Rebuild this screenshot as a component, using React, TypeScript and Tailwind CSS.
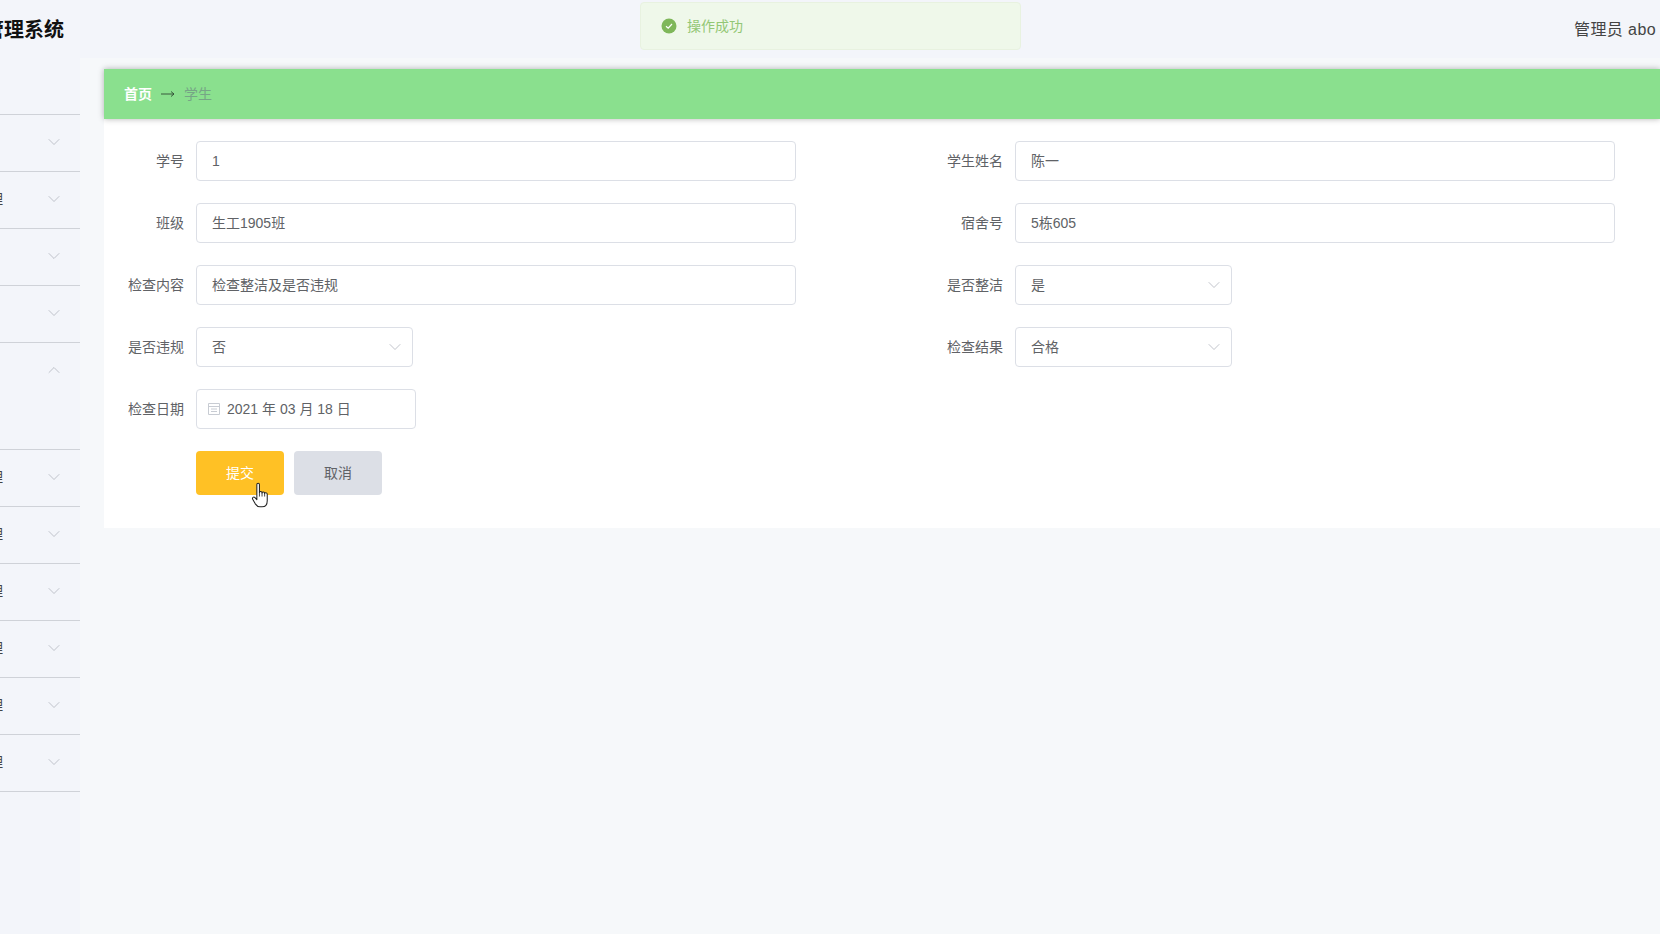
import { ChevronDown, ChevronUp } from "lucide-react";

const sidebarRows = [
  { label: "", h: "h-[57px]" },
  { label: "宿舍管理", h: "h-[57px]" },
  { label: "", h: "h-[57px]" },
  { label: "", h: "h-[57px]" },
  { label: "", h: "h-[107px]", open: true },
  { label: "宿舍管理", h: "h-[57px]" },
  { label: "宿舍管理", h: "h-[57px]" },
  { label: "宿舍管理", h: "h-[57px]" },
  { label: "宿舍管理", h: "h-[57px]" },
  { label: "宿舍管理", h: "h-[57px]" },
  { label: "宿舍管理", h: "h-[58px]" },
];

function Label({ text }: { text: string }) {
  return <label className="w-[80px] shrink-0 text-right text-sm text-[#606266]">{text}</label>;
}

function TextField({ label, value }: { label: string; value: string }) {
  return (
    <div className="flex items-center gap-3">
      <Label text={label} />
      <div className="flex h-10 w-[600px] items-center rounded border border-[#dcdfe6] bg-white px-[15px] text-sm text-[#606266]">
        {value}
      </div>
    </div>
  );
}

function SelectField({ label, value }: { label: string; value: string }) {
  return (
    <div className="flex items-center gap-3">
      <Label text={label} />
      <div className="flex h-10 w-[217px] items-center justify-between rounded border border-[#dcdfe6] bg-white pl-[15px] pr-[7px] text-sm text-[#606266]">
        <span>{value}</span>
        <ChevronDown size={20} strokeWidth={1} className="text-[#b4b8c0]" />
      </div>
    </div>
  );
}

export default function App() {
  return (
    <div className="relative flex h-screen w-full flex-col overflow-hidden bg-[#f3f5fa] font-['Liberation_Sans','Noto_Sans_CJK_SC',sans-serif]">
      <header className="flex h-[58px] shrink-0 items-center justify-between pr-1 pt-[2px]">
        <div className="flex w-[64px] justify-end overflow-hidden">
          <h1 className="shrink-0 whitespace-nowrap text-xl font-bold text-[#111]">宿舍管理系统</h1>
        </div>
        <span className="text-base tracking-[0.4px] text-[#444]">管理员 abo</span>
      </header>

      <div className="absolute left-[640px] top-[2px] flex h-12 w-[381px] items-center gap-[10px] rounded border border-[#e8f2e0] bg-[#eff8ea] pl-[20px] text-sm text-[#93c775]">
        <svg width="16" height="16" viewBox="0 0 16 16">
          <circle cx="8" cy="8" r="7.5" fill="#7fb75a" />
          <path d="M5 8.2 7.2 10.2 11 6" fill="none" stroke="#fff" strokeWidth="1.2" />
        </svg>
        操作成功
      </div>

      <div className="flex min-h-0 flex-1">
        <aside className="flex w-20 shrink-0 flex-col overflow-hidden pt-[56px]">
          {sidebarRows.map((row, i) => (
            <div key={i} className={`${row.h} flex border-t border-[#cfd2d8] last:border-b`}>
              <div className="flex h-[54px] w-full items-center overflow-hidden">
                {row.label ? (
                  <span className="-ml-[53px] w-[56px] shrink-0 text-sm text-[#444]">{row.label}</span>
                ) : (
                  <span className="w-[3px] shrink-0" />
                )}
                <span className="ml-[41px]">
                  {row.open ? (
                    <ChevronUp size={20} strokeWidth={1} className="text-[#b4b8c0]" />
                  ) : (
                    <ChevronDown size={20} strokeWidth={1} className="text-[#b4b8c0]" />
                  )}
                </span>
              </div>
            </div>
          ))}
        </aside>

        <main className="min-w-0 flex-1 bg-[#f6f8fa] pl-6 pt-[11px]">
          <div className="relative z-10 flex h-[50px] items-center bg-[#8ae08e] pl-5 text-sm shadow-[0_0_6px_rgba(0,0,0,0.3)]">
            <span className="font-bold text-white">首页</span>
            <svg width="14" height="8" viewBox="0 0 14 8" className="ml-[9px] mr-[9px]">
              <path d="M0 4H13M10 1.500 13 4 10 6.500" fill="none" stroke="#2f4a33" strokeWidth="0.9" />
            </svg>
            <span className="text-[#76a586]">学生</span>
          </div>

          <section className="bg-white pb-[33px] pt-[22px]">
            <div className="grid grid-cols-[819px_737px] gap-y-[22px]">
              <TextField label="学号" value="1" />
              <TextField label="学生姓名" value="陈一" />
              <TextField label="班级" value="生工1905班" />
              <TextField label="宿舍号" value="5栋605" />
              <TextField label="检查内容" value="检查整洁及是否违规" />
              <SelectField label="是否整洁" value="是" />
              <SelectField label="是否违规" value="否" />
              <SelectField label="检查结果" value="合格" />
              <div className="col-span-2 flex items-center gap-3">
                <Label text="检查日期" />
                <div className="flex h-10 w-[220px] items-center rounded border border-[#dcdfe6] bg-white pl-[10px] text-sm text-[#606266]">
                  <svg width="14" height="14" viewBox="0 0 14 14" className="mr-[6px]">
                    <path d="M1.500 1.500h11v11h-11zM1.500 4.500h11M4 7h6M4 9.500h6" fill="none" stroke="#c8ccd3" strokeWidth="1" />
                  </svg>
                  2021 年 03 月 18 日
                </div>
              </div>
              <div className="col-span-2 flex gap-[10px] pl-[92px]">
                <div className="relative">
                  <button className="h-11 w-[88px] rounded bg-[#ffc125] text-sm text-white">提交</button>
                  <svg
                    width="20"
                    height="26"
                    viewBox="0 0 18 25"
                    className="absolute left-[55px] top-[31px]"
                  >
                    <path
                      d="M5 2.500C5 .8 7.500 .8 7.500 2.500V10C7.500 8.800 10 8.800 10 10.500C10 9.300 12.500 9.300 12.500 11C12.500 10 15 10 15 11.800V18C15 21.500 13.500 23.800 10 23.800H8C5.500 23.800 4.500 22.500 3.500 21L1 16.500C.2 15 2 13.800 3.200 15L5 17Z"
                      fill="#fff"
                      stroke="#222"
                      strokeWidth="1"
                      strokeLinejoin="round"
                    />
                    <path d="M7.500 10V14M10 10.500V14M12.500 11V14" fill="none" stroke="#222" strokeWidth="0.8" />
                  </svg>
                </div>
                <button className="h-11 w-[88px] rounded bg-[#dcdfe6] text-sm text-[#606266]">取消</button>
              </div>
            </div>
          </section>
        </main>
      </div>
    </div>
  );
}
